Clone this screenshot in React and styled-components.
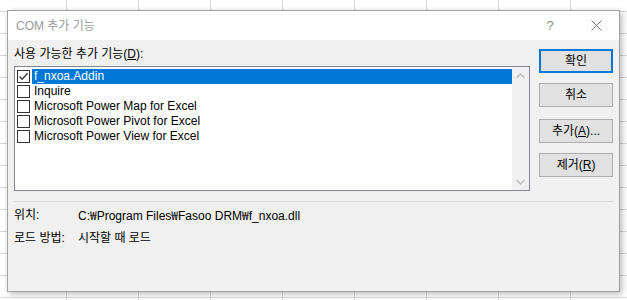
import React from 'react';
import styled, { createGlobalStyle } from 'styled-components';

const Global = createGlobalStyle`
  html, body { margin: 0; padding: 0; }
  body {
    width: 627px;
    height: 300px;
    overflow: hidden;
    background-color: #ffffff;
    background-image:
      linear-gradient(to right, #d9d9d9 1px, transparent 1px),
      linear-gradient(to bottom, #d9d9d9 1px, transparent 1px);
    background-size: 72px 22px;
    background-position: 66px 11px;
    font-family: "Liberation Sans", "Noto Sans CJK KR", sans-serif;
    font-size: 12px;
    color: #000;
  }
`;

const Page = styled.div`
  padding: 10px 0 0 7px;
`;

const Dialog = styled.div`
  width: 613px;
  height: 282px;
  box-sizing: border-box;
  border: 1px solid #a3a3a3;
  background: #f0f0f0;
  box-shadow: 2px 2px 6px rgba(0, 0, 0, 0.28);
  display: flex;
  flex-direction: column;
`;

const TitleBar = styled.div`
  height: 29px;
  flex-shrink: 0;
  background: #ffffff;
  display: flex;
  align-items: center;
`;

const Title = styled.div`
  flex: 1;
  padding-left: 8px;
  color: #9a9a9a;
  line-height: 16px;
`;

const TitleButton = styled.div`
  width: 46px;
  height: 29px;
  display: flex;
  align-items: center;
  justify-content: center;
  color: #8a8a8a;
  font-size: 13px;
`;

const Content = styled.div`
  flex: 1;
  padding: 0 6px;
  display: flex;
  flex-direction: column;
`;

const TopSection = styled.div`
  display: flex;
  gap: 9px;
`;

const LeftCol = styled.div`
  width: 516px;
  display: flex;
  flex-direction: column;
`;

const Label = styled.div`
  margin-top: 7px;
  height: 15px;
  line-height: 15px;
`;

const ListBox = styled.div`
  margin-top: 4px;
  height: 125px;
  box-sizing: border-box;
  border: 1px solid #828790;
  background: #ffffff;
  display: flex;
`;

const Items = styled.div`
  flex: 1;
  padding-top: 2px;
`;

const Row = styled.div`
  height: 15px;
  display: flex;
  align-items: center;
  padding-left: 2px;
`;

const CheckBox = styled.div`
  width: 13px;
  height: 13px;
  box-sizing: border-box;
  border: 1px solid #333333;
  background: #ffffff;
  margin-right: 2px;
  display: flex;
  align-items: center;
  justify-content: center;
  flex-shrink: 0;
`;

const ItemLabel = styled.div`
  flex: 1;
  height: 15px;
  line-height: 15px;
  padding-left: 2px;
  white-space: nowrap;
  background: ${p => (p.$selected ? '#0078d7' : 'transparent')};
  color: ${p => (p.$selected ? '#ffffff' : '#000000')};
`;

const ScrollBar = styled.div`
  width: 17px;
  background: #f0f0f0;
  display: flex;
  flex-direction: column;
  justify-content: space-between;
`;

const ScrollArrow = styled.div`
  width: 17px;
  height: 17px;
  display: flex;
  align-items: center;
  justify-content: center;
`;

const ButtonCol = styled.div`
  width: 74px;
  display: flex;
  flex-direction: column;
  padding-top: 9px;
`;

const Button = styled.div`
  height: 24px;
  box-sizing: border-box;
  margin-top: ${p => p.$gap || 0}px;
  border: ${p => (p.$default ? '2px solid #0078d7' : '1px solid #adadad')};
  background: #e1e1e1;
  display: flex;
  align-items: center;
  justify-content: center;
  line-height: 15px;
`;

const Separator = styled.div`
  margin-top: 10px;
  height: 1px;
  background: #dadada;
`;

const Info = styled.div`
  padding-top: 2px;
  display: grid;
  grid-template-columns: 64px 1fr;
  line-height: 22px;
`;

const Won = styled.span`
  font-family: "Noto Sans CJK KR", sans-serif;
`;

const Check = () => (
  <svg width="11" height="11" viewBox="0 0 11 11">
    <path d="M1.5 5.5 L4.2 8.3 L9.6 2.2" fill="none" stroke="#3a3a3a" strokeWidth="1.3" />
  </svg>
);

const Chevron = ({ up }) => (
  <svg width="9" height="6" viewBox="0 0 9 6">
    <path
      d={up ? 'M0.5 5 L4.5 1 L8.5 5' : 'M0.5 1 L4.5 5 L8.5 1'}
      fill="none"
      stroke="#c2c2c2"
      strokeWidth="1.6"
    />
  </svg>
);

const CloseIcon = () => (
  <svg width="11" height="11" viewBox="0 0 11 11">
    <path d="M0.5 0.5 L10.5 10.5 M10.5 0.5 L0.5 10.5" stroke="#7a7a7a" strokeWidth="1" />
  </svg>
);

const items = [
  { name: 'f_nxoa.Addin', checked: true, selected: true },
  { name: 'Inquire' },
  { name: 'Microsoft Power Map for Excel' },
  { name: 'Microsoft Power Pivot for Excel' },
  { name: 'Microsoft Power View for Excel' },
];

export default function App() {
  return (
    <Page>
      <Global />
      <Dialog>
        <TitleBar>
          <Title>COM 추가 기능</Title>
          <TitleButton>?</TitleButton>
          <TitleButton>
            <CloseIcon />
          </TitleButton>
        </TitleBar>
        <Content>
          <TopSection>
            <LeftCol>
              <Label>
                사용 가능한 추가 기능(<u>D</u>):
              </Label>
              <ListBox>
                <Items>
                  {items.map(it => (
                    <Row key={it.name}>
                      <CheckBox>{it.checked && <Check />}</CheckBox>
                      <ItemLabel $selected={it.selected}>{it.name}</ItemLabel>
                    </Row>
                  ))}
                </Items>
                <ScrollBar>
                  <ScrollArrow>
                    <Chevron up />
                  </ScrollArrow>
                  <ScrollArrow>
                    <Chevron />
                  </ScrollArrow>
                </ScrollBar>
              </ListBox>
            </LeftCol>
            <ButtonCol>
              <Button $default>확인</Button>
              <Button $gap={10}>취소</Button>
              <Button $gap={12}>
                추가(<u>A</u>)...
              </Button>
              <Button $gap={10}>
                제거(<u>R</u>)
              </Button>
            </ButtonCol>
          </TopSection>
          <Separator />
          <Info>
            <div>위치:</div>
            <div>
              C:<Won>₩</Won>Program Files<Won>₩</Won>Fasoo DRM<Won>₩</Won>f_nxoa.dll
            </div>
            <div>로드 방법:</div>
            <div>시작할 때 로드</div>
          </Info>
        </Content>
      </Dialog>
    </Page>
  );
}
